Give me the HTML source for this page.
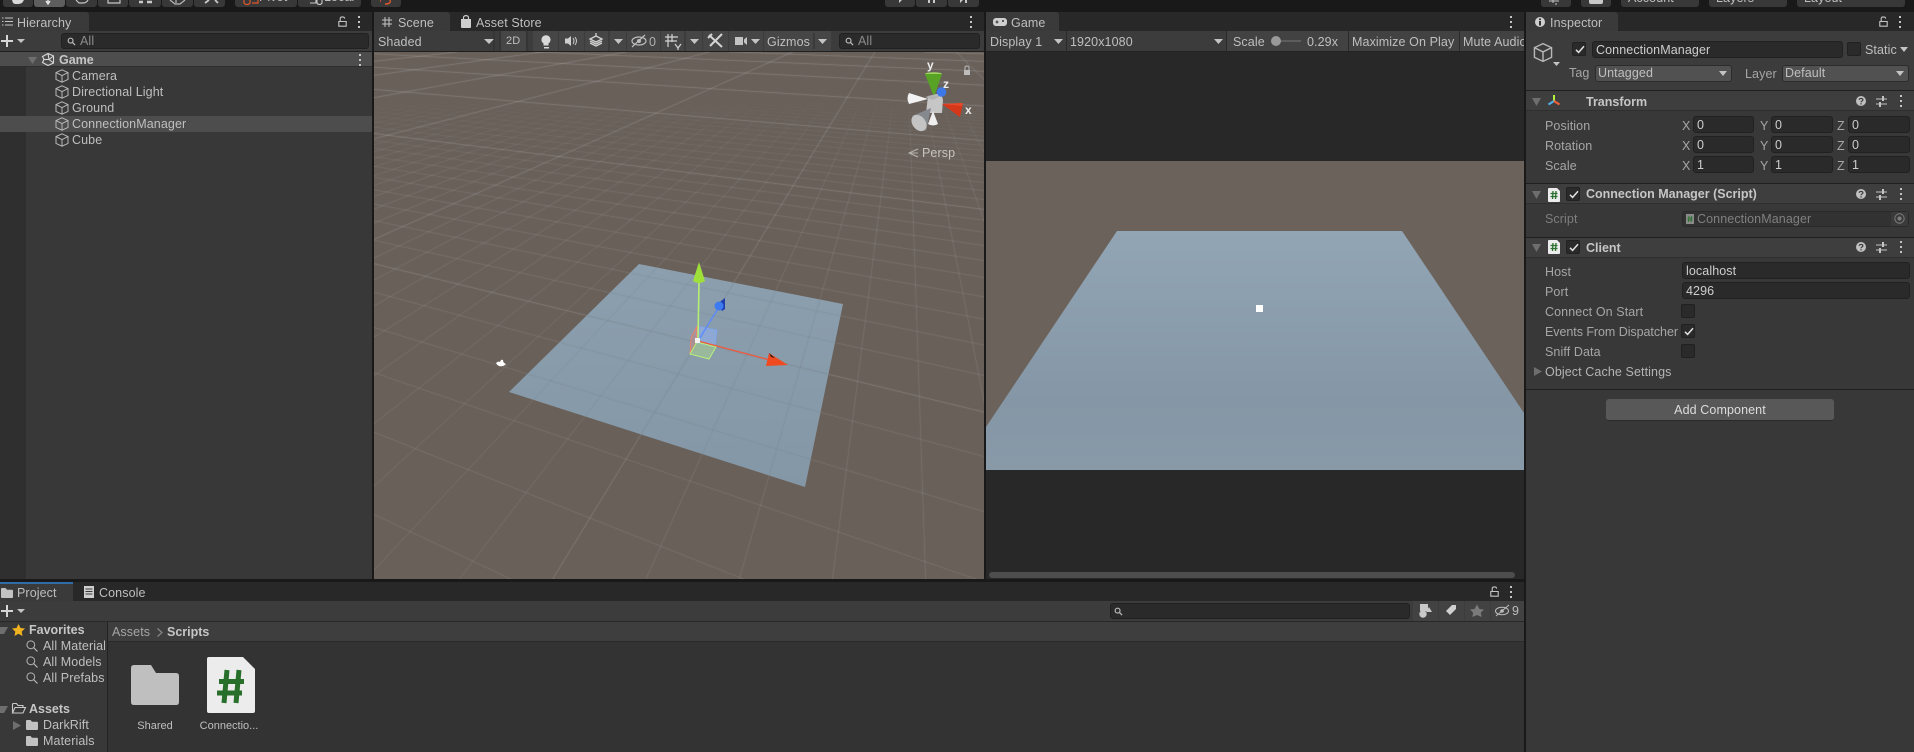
<!DOCTYPE html>
<html lang="en"><head><meta charset="utf-8"><title>Unity Editor</title>
<style>
html,body{margin:0;padding:0;width:1914px;height:752px;overflow:hidden;background:#191919}
body{position:relative;font:12.5px/16px "Liberation Sans",sans-serif;color:#bfbfbf}
div{box-sizing:border-box}
.a{position:absolute}
.t{position:absolute;white-space:nowrap;height:16px;line-height:16px;letter-spacing:.1px}
.b{font-weight:bold;color:#c6c6c6;letter-spacing:0}
.d{color:#8c8c8c}
.p{position:absolute;background:#383838;overflow:hidden}
.tb{position:absolute;background:#3c3c3c;height:20px}
.f{position:absolute;background:#2a2a2a;border:1px solid #212121;border-radius:3px;height:17px;line-height:17px;padding-left:3px;color:#cdcdcd;letter-spacing:.1px;white-space:nowrap}
.c{position:absolute;width:14px;height:14px;background:#2a2a2a;border:1px solid #212121;border-radius:2px}
.g{position:absolute;top:0;height:7px;background:#383838;border-radius:0 0 3px 3px}
.seg{position:absolute;top:31px;height:20px;background:#464646}
.sep{position:absolute;height:1px;background:#1f1f1f}
svg{position:absolute;overflow:visible}
</style></head><body>
<svg width="0" height="0" style="position:absolute"><defs>
<symbol id="cube" viewBox="0 0 14 14"><path d="M7 .8 13 3.6V10.400L7 13.200 1 10.400V3.600ZM1 3.600 7 6.600 13 3.600M7 6.600V13.200" fill="none" stroke="#b8b8b8" stroke-width="1"/></symbol>
<symbol id="dots" viewBox="0 0 4 12"><rect x="1" y="0" width="2" height="2" fill="#c4c4c4"/><rect x="1" y="5" width="2" height="2" fill="#c4c4c4"/><rect x="1" y="10" width="2" height="2" fill="#c4c4c4"/></symbol>
<symbol id="lock" viewBox="0 0 9 11"><path d="M.8 5.500H8.200V10.200H.8ZM2.200 5.500V2.600C2.200 .4 6.600 .4 6.600 2.600" fill="none" stroke="#c4c4c4" stroke-width="1.100"/></symbol>
<symbol id="mag" viewBox="0 0 10 10"><circle cx="4" cy="4" r="2.700" fill="none" stroke="#bbb" stroke-width="1.300"/><path d="M6 6 9 9" stroke="#bbb" stroke-width="1.400"/></symbol>
<symbol id="bigmag" viewBox="0 0 12 12"><circle cx="4.800" cy="4.800" r="3.900" fill="none" stroke="#b5b5b5" stroke-width="1"/><path d="M7.600 7.600 11.500 11.500" stroke="#b5b5b5" stroke-width="1.200"/></symbol>
<symbol id="help" viewBox="0 0 10 10"><circle cx="5" cy="5" r="5" fill="#c0c0c0"/><path d="M3.200 3.800C3.300 2 6.900 2 6.900 3.900 6.900 5.100 5 5 5 6.300" fill="none" stroke="#3c3c3c" stroke-width="1.200"/><rect x="4.400" y="7.200" width="1.300" height="1.300" fill="#3c3c3c"/></symbol>
<symbol id="sliders" viewBox="0 0 11 11"><path d="M0 3H11M0 8H11" stroke="#c4c4c4" stroke-width="1"/><rect x="6" y="0" width="2" height="5" fill="#c4c4c4"/><rect x="3" y="6" width="2" height="5" fill="#c4c4c4"/></symbol>
<symbol id="script" viewBox="0 0 12 14"><path d="M0 1Q0 0 1 0H9L12 3V13Q12 14 11 14H1Q0 14 0 13Z" fill="#ececec"/><path d="M5 3 4.500 11M8 3 7.500 11M2.500 5.500H9.500M2.500 8.500H9.500" stroke="#2a702e" stroke-width="1.300" fill="none"/></symbol>
<symbol id="check" viewBox="0 0 10 9"><path d="M1 4.800 3.600 7.400 9 1.200" fill="none" stroke="#e2e2e2" stroke-width="1.500"/></symbol>
<symbol id="folder" viewBox="0 0 12 10"><path d="M0 1Q0 0 1 0H4.500L6 1.800H11Q12 1.800 12 2.800V9Q12 10 11 10H1Q0 10 0 9Z" fill="#c2c2c2"/></symbol>
</defs></svg>

<!-- main toolbar -->
<div class="g" style="left:3px;width:30px"></div><div class="g" style="left:34px;width:31px;background:#5e5e5e"></div>
<div class="g" style="left:66px;width:31px"></div><div class="g" style="left:98px;width:30px"></div>
<div class="g" style="left:129px;width:32px"></div><div class="g" style="left:162px;width:31px"></div>
<div class="g" style="left:194px;width:31px"></div>
<div class="g" style="left:235px;width:62px"></div><div class="g" style="left:298px;width:63px"></div>
<div class="g" style="left:371px;width:30px"></div>
<div class="g" style="left:885px;width:30px"></div><div class="g" style="left:916px;width:31px"></div><div class="g" style="left:948px;width:31px"></div>
<div class="g" style="left:1541px;width:30px"></div><div class="g" style="left:1581px;width:30px"></div>
<div class="g" style="left:1621px;width:78px"></div><div class="g" style="left:1709px;width:78px"></div><div class="g" style="left:1797px;width:108px"></div>
<svg style="left:0;top:0" width="1914" height="12" viewBox="0 0 1914 12">
<path d="M12 0H24L22 3 19 4H15L13 3Z" fill="#d8d8d8"/>
<path d="M48 0V3M46 1 48 4 50 1" stroke="#e8e8e8" fill="none" stroke-width="1.400"/>
<path d="M76 0 79 3H83M88 0C87 2 85 3 83 3" stroke="#c8c8c8" fill="none" stroke-width="1.200"/>
<path d="M108 0V3H120V0" stroke="#c8c8c8" fill="none" stroke-width="1.200"/>
<path d="M139 2H143M147 2H152" stroke="#c8c8c8" stroke-width="2.600"/>
<path d="M170 0 175 4 180 4 185 0M176 0V3" stroke="#b8b8b8" fill="none" stroke-width="1.200"/>
<path d="M205 3 209 0M215 0 218 3" stroke="#c8c8c8" fill="none" stroke-width="1.800"/>
<path d="M244 0V3C245 5 249 5 250 3V0M252 3H258V0" stroke="#e0582a" fill="none" stroke-width="1.200"/>
<path d="M310 3H316V0M317 0V3C318 5 321 5 322 3V0" stroke="#c8c8c8" fill="none" stroke-width="1.100"/>
<path d="M380 1H381M390 0C391 3 389 4 385 4" stroke="#e0582a" fill="none" stroke-width="1.400"/>
<path d="M899 0 V3 L902 0Z M928 0H930V3H928ZM933 0H935V3H933ZM960 0V3L963 0ZM965 0H967V3H965Z" fill="#c8c8c8"/>
<path d="M1553 0V3M1549 1H1559M1556 3V5" stroke="#c4c4c4" fill="none"/>
<path d="M1589 0H1603V2Q1603 4 1601 4H1591Q1589 4 1589 2Z" fill="#c8c8c8"/>
</svg>
<div class="t" style="left:259px;top:-11px">Pivot</div>
<div class="t" style="left:324px;top:-11px">Local</div>
<div class="t" style="left:1628px;top:-10px">Account</div>
<div class="t" style="left:1716px;top:-10px">Layers</div>
<div class="t" style="left:1804px;top:-10px">Layout</div>

<!-- Hierarchy -->
<div class="p" style="left:0;top:12px;width:372px;height:567px;background:#383838"></div>
<div class="a" style="left:0;top:12px;width:372px;height:19px;background:#282828"></div>
<div class="a" style="left:0;top:12px;width:89px;height:19px;background:#3a3a3a;border-radius:0 3px 0 0"></div>
<svg style="left:2px;top:17px" width="11" height="9" viewBox="0 0 11 9"><path d="M3 1H11M3 4.500H11M3 8H11M0 1H1.500M0 4.500H1.500M0 8H1.500" stroke="#c4c4c4" stroke-width="1"/></svg>
<div class="t" style="left:17px;top:15px">Hierarchy</div>
<svg style="left:338px;top:16px" width="9" height="11"><use href="#lock"/></svg>
<svg style="left:357px;top:16px" width="4" height="12"><use href="#dots"/></svg>
<div class="tb" style="left:0;top:31px;width:372px"></div>
<div class="sep" style="left:0;top:51px;width:372px"></div>
<svg style="left:1px;top:35px" width="24" height="12" viewBox="0 0 24 12"><path d="M6 0V12M0 6H12" stroke="#d6d6d6" stroke-width="2"/><path d="M16 4H24L20 8Z" fill="#c4c4c4"/></svg>
<div class="f" style="left:61px;top:33px;width:308px;height:16px"></div>
<svg style="left:67px;top:37px" width="9" height="9"><use href="#mag"/></svg>
<div class="t d" style="left:80px;top:33px">All</div>
<div class="a" style="left:0;top:52px;width:26px;height:527px;background:#2f2f2f"></div>
<div class="a" style="left:0;top:52px;width:372px;height:15px;background:#4d4d4d;border-bottom:1px solid #2e2e2e"></div>
<svg style="left:28px;top:57px" width="9" height="7"><path d="M0 0H9L4.500 7Z" fill="#6e6e6e"/></svg>
<svg style="left:42px;top:53px" width="12" height="13" viewBox="0 0 12 13"><path d="M6 .5 11.500 3V10L6 12.500 .5 9.500 2 6.500 .5 3.500ZM6 .5 7 6.500 11.500 10M7 6.500 2 6.500M7 6.500 11.500 3" fill="none" stroke="#d8d8d8" stroke-width="1.100"/></svg>
<div class="t b" style="left:59px;top:52px">Game</div>
<svg style="left:358px;top:54px" width="4" height="12"><use href="#dots"/></svg>
<div class="a" style="left:0;top:116px;width:372px;height:16px;background:#4d4d4d"></div>
<svg style="left:55px;top:69px" width="14" height="14"><use href="#cube"/></svg><div class="t" style="left:72px;top:68px">Camera</div>
<svg style="left:55px;top:85px" width="14" height="14"><use href="#cube"/></svg><div class="t" style="left:72px;top:84px">Directional Light</div>
<svg style="left:55px;top:101px" width="14" height="14"><use href="#cube"/></svg><div class="t" style="left:72px;top:100px">Ground</div>
<svg style="left:55px;top:117px" width="14" height="14"><use href="#cube"/></svg><div class="t" style="left:72px;top:116px">ConnectionManager</div>
<svg style="left:55px;top:133px" width="14" height="14"><use href="#cube"/></svg><div class="t" style="left:72px;top:132px">Cube</div>

<!-- Scene -->
<div class="a" style="left:374px;top:12px;width:610px;height:19px;background:#282828"></div>
<div class="a" style="left:374px;top:12px;width:76px;height:19px;background:#3a3a3a;border-radius:0 3px 0 0"></div>
<svg style="left:382px;top:17px" width="10" height="10"><path d="M3 0V10M7 0V10M0 3H10M0 7H10" stroke="#c4c4c4" stroke-width="1"/></svg>
<div class="t" style="left:398px;top:15px">Scene</div>
<svg style="left:461px;top:15px" width="10" height="13" viewBox="0 0 10 13"><path d="M0 4H10V12Q10 13 9 13H1Q0 13 0 12Z" fill="#cfcfcf"/><path d="M2.500 5V2.500C2.500 0 7.500 0 7.500 2.500V5" fill="none" stroke="#cfcfcf" stroke-width="1.200"/></svg>
<div class="t" style="left:476px;top:15px">Asset Store</div>
<svg style="left:969px;top:16px" width="4" height="12"><use href="#dots"/></svg>
<div class="tb" style="left:374px;top:31px;width:610px"></div>
<div class="sep" style="left:374px;top:51px;width:610px"></div>
<div class="seg" style="left:501px;width:25px"></div><div class="seg" style="left:533px;width:25px"></div>
<div class="seg" style="left:559px;width:25px"></div><div class="seg" style="left:585px;width:41px"></div>
<div class="seg" style="left:627px;width:33px"></div><div class="seg" style="left:661px;width:41px"></div>
<div class="seg" style="left:703px;width:25px"></div><div class="seg" style="left:729px;width:34px"></div>
<div class="seg" style="left:764px;width:67px"></div>
<div class="t" style="left:378px;top:34px">Shaded</div>
<div class="t" style="left:506px;top:33px;font-size:11px">2D</div>
<div class="t" style="left:767px;top:34px">Gizmos</div>
<div class="t d" style="left:649px;top:34px;color:#b0b0b0">0</div>
<svg style="left:374px;top:31px" width="470" height="20" viewBox="374 31 470 20">
<path d="M484 39H494L489 44Z" fill="#c4c4c4"/>
<path d="M494 31V51M500 31V51M527 31V51" stroke="#2e2e2e"/>
<path d="M545 36A4.500 4.500 0 0 1 549 44V46H544V44A4.500 4.500 0 0 1 545 36Z" fill="#d8d8d8" transform="translate(-.5,-.5)"/><rect x="544" y="47" width="5" height="1.500" fill="#d8d8d8"/>
<path d="M565 38.500H568L571 36V46L568 43.500H565Z" fill="#cfcfcf"/><path d="M573 38Q575 41 573 44M575 37Q578 41 575 45" fill="none" stroke="#cfcfcf"/>
<path d="M590 39 596 36 602 39 596 42ZM590 43 596 46 602 43M590 41 596 44 602 41M596 33V36" fill="none" stroke="#d2d2d2" stroke-width="1.300"/>
<path d="M609 31V51" stroke="#333"/>
<path d="M614 39H623L618.500 44Z" fill="#c4c4c4"/>
<ellipse cx="639" cy="41" rx="7" ry="4" fill="none" stroke="#bdbdbd" stroke-width="1.200"/><circle cx="639" cy="41" r="2" fill="#bdbdbd"/><path d="M632 47 645 35" stroke="#bdbdbd" stroke-width="1.200"/>
<path d="M668 34V47M672 34V42M665 37H678M665 41H677M675 44 678 48M681 44 678 48V50" fill="none" stroke="#d4d4d4" stroke-width="1.200"/>
<path d="M685 31V51" stroke="#333"/>
<path d="M690 39H699L694.500 44Z" fill="#c4c4c4"/>
<path d="M709 35 722 47M722 34 710 46M708 38 712 34" fill="none" stroke="#d4d4d4" stroke-width="2"/>
<rect x="735" y="37" width="8" height="8" fill="#c4c4c4"/><path d="M744 39.500 747 37V45L744 42.500Z" fill="#c4c4c4"/>
<path d="M751 39H760L755.500 44Z" fill="#c4c4c4"/>
<path d="M814 33V49" stroke="#2e2e2e"/><path d="M818 39H827L822.500 44Z" fill="#c4c4c4"/>
</svg>
<div class="f" style="left:839px;top:33px;width:141px;height:16px"></div>
<svg style="left:845px;top:37px" width="9" height="9"><use href="#mag"/></svg>
<div class="t d" style="left:858px;top:33px">All</div>

<div class="a" id="scene" style="left:374px;top:52px;width:610px;height:527px;background:#69605a;overflow:hidden">
<svg style="left:0;top:0" width="610" height="527" viewBox="374 52 610 527">
<defs><linearGradient id="pg" x1="0" y1="0" x2="0" y2="1"><stop offset="0" stop-color="#8c9fae"/><stop offset="1" stop-color="#8497a6"/></linearGradient></defs>
<polygon points="639,264 843,304 805,487 509,392" fill="url(#pg)"/>
</svg>
<canvas id="grid" width="610" height="527" style="position:absolute;left:0;top:0"></canvas>
<svg style="left:0;top:0" width="610" height="527" viewBox="374 52 610 527">
<!-- cube selection -->
<polygon points="696,326 717,330 715,347 696,343" fill="#8fb0f0" fill-opacity=".6" stroke="#79a6ff" stroke-opacity=".8" stroke-width=".8"/>
<polygon points="691,338 697,326 696,343 690,354" fill="#e08070" fill-opacity=".35" stroke="#ff7a60" stroke-width=".8"/>
<polygon points="697,342 716,347 709,359 690,354" fill="#a6d090" fill-opacity=".55" stroke="#b6f27a" stroke-width="1"/>
<!-- axes -->
<path d="M698 340 699 282" stroke="#b4f073" stroke-width="1.600"/>
<path d="M698 341 719 307" stroke="#5c8cff" stroke-width="1.400"/>
<path d="M698 341 770 360" stroke="#f0593c" stroke-width="1.400"/>
<path d="M699 262 693 281Q699 285 705 281Z" fill="#9fdf3a"/>
<path d="M725 298 717 304 722 311 725 309Z" fill="#1f3fb0"/><circle cx="719" cy="306" r="4.500" fill="#3f7bf0"/>
<path d="M769 353 788 365 766 366Z" fill="#f04a20"/><path d="M769 353 775 358 771 357Z" fill="#3a1a10"/>
<rect x="695" y="338" width="5" height="5" fill="#f2f2f2"/>
<path d="M496 363Q498 361 500 362 501 359 503 360 503 363 506 364 503 367 499 366Q497 365 496 363Z" fill="#fff"/>
<!-- orientation gizmo -->
<ellipse cx="933.500" cy="74" rx="8.500" ry="1.800" fill="#9fd45e"/>
<path d="M925 74H942L934 97Z" fill="#58a226"/>
<path d="M928 96 941 93 943 100 942 113 926 113Z" fill="#c6c6c6"/><path d="M925 97 933 95 941 96 933 100Z" fill="#b2b2b2"/>
<circle cx="941.500" cy="92" r="4.800" fill="#3d78e8"/>
<path d="M928 99 909 93Q906 98 909 104Z" fill="#f2f2f2"/>
<path d="M942 104 963 103 960 117Z" fill="#d5371a"/>
<path d="M942 104 963 103 962 106Z" fill="#e8492a"/>
<path d="M931 108 912 116 926 131Z" fill="#85888c"/>
<ellipse cx="919" cy="123" rx="6.500" ry="9" transform="rotate(-38 919 123)" fill="#c4c4c4"/>
<path d="M933 111 928 124Q933 127 938 124Z" fill="#efefef"/>
<path d="M964 70H970V75H964Z" fill="#bdbdbd" stroke="none"/><path d="M965 70V67.500C965 65.500 969 65.500 969 67.500V70" fill="none" stroke="#bdbdbd" stroke-width="1"/>
<path d="M918 149 909 153 918 157M918 153H910" fill="none" stroke="#b8b4b0" stroke-width="1"/>
</svg>
<div class="t" style="left:553px;top:5px;font-weight:bold;color:#eee;font-size:12px">y</div>
<div class="t" style="left:569px;top:24px;font-weight:bold;color:#eee;font-size:12px">z</div>
<div class="t" style="left:591px;top:50px;font-weight:bold;color:#eee;font-size:12px">x</div>
<div class="t" style="left:548px;top:93px;color:#c8c4c0">Persp</div>
</div>

<!-- Game -->
<div class="a" style="left:986px;top:12px;width:538px;height:19px;background:#282828"></div>
<div class="a" style="left:986px;top:12px;width:73px;height:19px;background:#3a3a3a;border-radius:0 3px 0 0"></div>
<svg style="left:993px;top:18px" width="14" height="8" viewBox="0 0 14 8"><rect width="14" height="8" rx="3" fill="#cfcfcf"/><path d="M2.500 4H5.500M4 2.500V5.500" stroke="#333"/><circle cx="10" cy="3" r="1" fill="#333"/></svg>
<div class="t" style="left:1011px;top:15px">Game</div>
<svg style="left:1509px;top:16px" width="4" height="12"><use href="#dots"/></svg>
<div class="tb" style="left:986px;top:31px;width:538px"></div>
<div class="sep" style="left:986px;top:51px;width:538px;background:#232323"></div>
<div class="a" style="left:1066px;top:31px;width:1px;height:20px;background:#2a2a2a"></div>
<div class="a" style="left:1226px;top:31px;width:1px;height:20px;background:#2a2a2a"></div>
<div class="a" style="left:1348px;top:31px;width:1px;height:20px;background:#2a2a2a"></div>
<div class="a" style="left:1459px;top:31px;width:1px;height:20px;background:#2a2a2a"></div>
<div class="a" style="left:1227px;top:31px;width:121px;height:20px;background:#424242"></div>
<div class="a" style="left:1349px;top:31px;width:110px;height:20px;background:#424242"></div>
<div class="a" style="left:1460px;top:31px;width:64px;height:20px;background:#424242"></div>
<div class="t" style="left:990px;top:34px">Display 1</div>
<div class="t" style="left:1070px;top:34px">1920x1080</div>
<div class="t" style="left:1233px;top:34px">Scale</div>
<div class="t" style="left:1307px;top:34px">0.29x</div>
<div class="t" style="left:1352px;top:34px">Maximize On Play</div>
<div class="a" style="left:1463px;top:34px;width:61px;height:16px;overflow:hidden"><div class="t" style="left:0;top:0">Mute Audio</div></div>
<svg style="left:986px;top:31px" width="538" height="20" viewBox="986 31 538 20">
<path d="M1054 39H1063L1058.500 44Z" fill="#c4c4c4"/><path d="M1214 39H1223L1218.500 44Z" fill="#c4c4c4"/>
<path d="M1276 41H1301" stroke="#6e6e6e" stroke-width="1.200"/><circle cx="1276" cy="41" r="5" fill="#999"/>
</svg>
<div class="a" style="left:986px;top:52px;width:538px;height:527px;background:#282828"></div>
<svg style="left:986px;top:161px" width="538" height="309" viewBox="986 161 538 309">
<defs><linearGradient id="gg" x1="0" y1="0" x2="0" y2="1"><stop offset="0" stop-color="#92a5b5"/><stop offset=".7" stop-color="#8597a6"/><stop offset="1" stop-color="#8899a8"/></linearGradient></defs>
<rect x="986" y="161" width="538" height="309" fill="#6b625b"/>
<polygon points="1117,231 1402,231 1524,413 1524,470 986,470 986,427" fill="url(#gg)"/>
<rect x="1256" y="305" width="7" height="7" fill="#fff"/>
</svg>
<div class="a" style="left:989px;top:572px;width:526px;height:6px;background:#4d4d4d;border-radius:3px"></div>

<!-- Project -->
<div class="p" style="left:0;top:582px;width:1524px;height:170px;background:#333"></div>
<div class="a" style="left:0;top:582px;width:1524px;height:19px;background:#282828"></div>
<div class="a" style="left:0;top:582px;width:73px;height:19px;background:#3a3a3a"></div>
<div class="a" style="left:0;top:582px;width:73px;height:2px;background:#2f6ca8"></div>
<svg style="left:1px;top:588px" width="12" height="10"><use href="#folder"/></svg>
<div class="t" style="left:17px;top:585px">Project</div>
<svg style="left:84px;top:586px" width="10" height="12" viewBox="0 0 10 12"><rect width="10" height="12" fill="#cfcfcf"/><path d="M1.500 3H8.500M1.500 5.500H8.500M1.500 8H8.500" stroke="#3a3a3a"/></svg>
<div class="t" style="left:99px;top:585px">Console</div>
<svg style="left:1490px;top:586px" width="9" height="11"><use href="#lock"/></svg>
<svg style="left:1509px;top:586px" width="4" height="12"><use href="#dots"/></svg>
<div class="tb" style="left:0;top:601px;width:1524px"></div>
<div class="sep" style="left:0;top:621px;width:1524px;background:#282828"></div>
<svg style="left:1px;top:605px" width="24" height="12" viewBox="0 0 24 12"><path d="M6 0V12M0 6H12" stroke="#d6d6d6" stroke-width="2"/><path d="M16 4H24L20 8Z" fill="#c4c4c4"/></svg>
<div class="f" style="left:1110px;top:603px;width:300px;height:16px"></div>
<svg style="left:1114px;top:607px" width="9" height="9"><use href="#mag"/></svg>
<div class="seg" style="left:1413px;top:601px;width:25px;background:#424242"></div>
<div class="seg" style="left:1439px;top:601px;width:25px;background:#424242"></div>
<div class="seg" style="left:1465px;top:601px;width:25px;background:#424242"></div>
<div class="seg" style="left:1491px;top:601px;width:33px;background:#424242"></div>
<svg style="left:1413px;top:601px" width="111" height="20" viewBox="1413 601 111 20">
<rect x="1420" y="604" width="8" height="7" fill="#c8c8c8"/><circle cx="1423" cy="614" r="3.700" fill="#c8c8c8"/><path d="M1429 607 1432 612H1426Z" fill="#c8c8c8"/>
<path d="M1446 611 1452 605 1456 605 1456 609 1450 615Z" fill="#d0d0d0"/>
<path d="M1477 604.500 1479.500 609 1484 609.500 1480.800 612.800 1481.700 617 1477 615 1472.300 617 1473.200 612.800 1470 609.500 1474.500 609Z" fill="#7a7a7a"/>
<ellipse cx="1502" cy="611" rx="6.500" ry="3.800" fill="none" stroke="#bdbdbd"/><circle cx="1502" cy="611" r="1.800" fill="#bdbdbd"/><path d="M1496 616 1509 605" stroke="#bdbdbd"/>
</svg>
<div class="t" style="left:1512px;top:603px;color:#bdbdbd">9</div>
<div class="a" style="left:0;top:622px;width:107px;height:130px;background:#383838"></div>
<div class="a" style="left:107px;top:622px;width:1px;height:130px;background:#232323"></div>
<div class="a" style="left:108px;top:622px;width:1416px;height:20px;background:#3e3e3e;border-bottom:1px solid #2a2a2a"></div>
<div class="t" style="left:112px;top:624px;color:#a6a6a6">Assets</div>
<svg style="left:157px;top:628px" width="6" height="9"><path d="M.5 .5 5 4.500 .5 8.500" fill="none" stroke="#888" stroke-width="1.200"/></svg>
<div class="t b" style="left:167px;top:624px">Scripts</div>

<svg style="left:0;top:627px" width="8" height="7"><path d="M0 0H8L4 7H0Z" fill="#6e6e6e"/></svg>
<svg style="left:12px;top:624px" width="13" height="12" viewBox="0 0 13 12"><path d="M6.500 0 8.500 4 13 4.500 9.700 7.600 10.500 12 6.500 9.800 2.500 12 3.300 7.600 0 4.500 4.500 4Z" fill="#f0b320"/></svg>
<div class="t b" style="left:29px;top:622px">Favorites</div>
<svg style="left:26px;top:640px" width="12" height="12"><use href="#bigmag"/></svg>
<div class="a" style="left:43px;top:638px;width:62px;height:16px;overflow:hidden"><div class="t" style="left:0;top:0">All Materials</div></div>
<svg style="left:26px;top:656px" width="12" height="12"><use href="#bigmag"/></svg><div class="t" style="left:43px;top:654px">All Models</div>
<svg style="left:26px;top:672px" width="12" height="12"><use href="#bigmag"/></svg><div class="t" style="left:43px;top:670px">All Prefabs</div>
<svg style="left:0;top:706px" width="8" height="7"><path d="M0 0H8L4 7H0Z" fill="#6e6e6e"/></svg>
<svg style="left:12px;top:703px" width="14" height="11" viewBox="0 0 14 11"><path d="M.5 10V1.500Q.5 .5 1.500 .5H4.500L6 2.500H11V4.500M.5 10 3 4.500H13.500L11 10Z" fill="none" stroke="#c8c8c8" stroke-width="1.100"/></svg>
<div class="t b" style="left:29px;top:701px">Assets</div>
<svg style="left:13px;top:721px" width="8" height="9"><path d="M0 0 8 4.500 0 9Z" fill="#6e6e6e"/></svg>
<svg style="left:26px;top:720px" width="12" height="10"><use href="#folder"/></svg><div class="t" style="left:43px;top:717px">DarkRift</div>
<svg style="left:26px;top:736px" width="12" height="10"><use href="#folder"/></svg><div class="t" style="left:43px;top:733px">Materials</div>

<svg style="left:131px;top:665px" width="48" height="40" viewBox="0 0 48 40"><path d="M0 3Q0 0 3 0H20L25 8H45Q48 8 48 11V37Q48 40 45 40H3Q0 40 0 37Z" fill="#bfbfbf"/></svg>
<div class="t" style="left:127px;top:718px;width:56px;text-align:center;font-size:11px;letter-spacing:0">Shared</div>
<svg style="left:207px;top:657px" width="48" height="56" viewBox="207 657 48 56"><path d="M209 657H243L255 669V711Q255 713 253 713H209Q207 713 207 711V659Q207 657 209 657Z" fill="#ececec"/><path d="M227 670 224 703M239 670 236 703" stroke="#276f2b" stroke-width="5" fill="none"/><path d="M219 681.500H244M217 693H242" stroke="#276f2b" stroke-width="5" fill="none"/></svg>
<div class="t" style="left:199px;top:718px;width:60px;text-align:center;font-size:11px;letter-spacing:0">Connectio...</div>

<!-- Inspector -->
<div class="p" style="left:1526px;top:12px;width:388px;height:740px;background:#383838"></div>
<div class="a" style="left:1526px;top:12px;width:388px;height:19px;background:#282828"></div>
<div class="a" style="left:1526px;top:12px;width:92px;height:19px;background:#3a3a3a;border-radius:0 3px 0 0"></div>
<svg style="left:1535px;top:17px" width="10" height="10"><circle cx="5" cy="5" r="5" fill="#cfcfcf"/><rect x="4" y="4" width="2" height="4.500" fill="#333"/><rect x="4" y="1.500" width="2" height="1.600" fill="#333"/></svg>
<div class="t" style="left:1550px;top:15px">Inspector</div>
<svg style="left:1879px;top:16px" width="9" height="11"><use href="#lock"/></svg>
<svg style="left:1898px;top:16px" width="4" height="12"><use href="#dots"/></svg>
<div class="a" style="left:1526px;top:31px;width:388px;height:59px;background:#3c3c3c"></div>
<svg style="left:1533px;top:42px" width="20" height="21"><use href="#cube"/></svg>
<svg style="left:1553px;top:62px" width="7" height="4"><path d="M0 0H7L3.500 4Z" fill="#c4c4c4"/></svg>
<div class="c" style="left:1572px;top:42px"><svg style="left:2px;top:2px" width="10" height="9"><use href="#check"/></svg></div>
<div class="f" style="left:1592px;top:41px;width:251px;height:17px">ConnectionManager</div>
<div class="c" style="left:1847px;top:42px"></div>
<div class="t" style="left:1865px;top:42px">Static</div>
<svg style="left:1900px;top:47px" width="8" height="5"><path d="M0 0H8L4 5Z" fill="#c4c4c4"/></svg>
<div class="t d" style="left:1569px;top:65px;color:#a6a6a6">Tag</div>
<div class="a" style="left:1595px;top:65px;width:137px;height:17px;background:#515151;border:1px solid #2c2c2c;border-radius:3px"></div>
<div class="t" style="left:1598px;top:65px">Untagged</div>
<svg style="left:1719px;top:71px" width="8" height="5"><path d="M0 0H8L4 5Z" fill="#c4c4c4"/></svg>
<div class="t" style="left:1745px;top:66px;color:#a6a6a6">Layer</div>
<div class="a" style="left:1782px;top:65px;width:127px;height:17px;background:#515151;border:1px solid #2c2c2c;border-radius:3px"></div>
<div class="t" style="left:1785px;top:65px">Default</div>
<svg style="left:1896px;top:71px" width="8" height="5"><path d="M0 0H8L4 5Z" fill="#c4c4c4"/></svg>
<div class="sep" style="left:1526px;top:90px;width:388px;background:#1f1f1f"></div>

<!-- component headers -->
<div class="a" style="left:1526px;top:91px;width:388px;height:20px;background:#3e3e3e;border-bottom:1px solid #2f2f2f"></div>
<svg style="left:1532px;top:98px" width="9" height="8"><path d="M0 0H9L4.500 8Z" fill="#6e6e6e"/></svg>
<svg style="left:1548px;top:95px" width="12" height="12" viewBox="0 0 12 12"><path d="M6 6V0" stroke="#b6f03c" stroke-width="2"/><path d="M6 6 .5 9.500" stroke="#4fb0ea" stroke-width="2.200"/><path d="M6 6 11.500 9.500" stroke="#f0603a" stroke-width="2.200"/></svg>
<div class="t b" style="left:1586px;top:94px">Transform</div>
<svg style="left:1856px;top:96px" width="10" height="10"><use href="#help"/></svg>
<svg style="left:1876px;top:96px" width="11" height="11"><use href="#sliders"/></svg>
<svg style="left:1899px;top:95px" width="4" height="12"><use href="#dots"/></svg>

<div class="t d" style="left:1545px;top:118px;color:#a6a6a6">Position</div>
<div class="t d" style="left:1545px;top:138px;color:#a6a6a6">Rotation</div>
<div class="t d" style="left:1545px;top:158px;color:#a6a6a6">Scale</div>
<div class="t d" style="left:1682px;top:118px;color:#a6a6a6">X</div><div class="f" style="left:1693px;top:116px;width:61px">0</div>
<div class="t d" style="left:1760px;top:118px;color:#a6a6a6">Y</div><div class="f" style="left:1771px;top:116px;width:62px">0</div>
<div class="t d" style="left:1837px;top:118px;color:#a6a6a6">Z</div><div class="f" style="left:1848px;top:116px;width:62px">0</div>
<div class="t d" style="left:1682px;top:138px;color:#a6a6a6">X</div><div class="f" style="left:1693px;top:136px;width:61px">0</div>
<div class="t d" style="left:1760px;top:138px;color:#a6a6a6">Y</div><div class="f" style="left:1771px;top:136px;width:62px">0</div>
<div class="t d" style="left:1837px;top:138px;color:#a6a6a6">Z</div><div class="f" style="left:1848px;top:136px;width:62px">0</div>
<div class="t d" style="left:1682px;top:158px;color:#a6a6a6">X</div><div class="f" style="left:1693px;top:156px;width:61px">1</div>
<div class="t d" style="left:1760px;top:158px;color:#a6a6a6">Y</div><div class="f" style="left:1771px;top:156px;width:62px">1</div>
<div class="t d" style="left:1837px;top:158px;color:#a6a6a6">Z</div><div class="f" style="left:1848px;top:156px;width:62px">1</div>
<div class="sep" style="left:1526px;top:183px;width:388px"></div>

<div class="a" style="left:1526px;top:184px;width:388px;height:20px;background:#3e3e3e;border-bottom:1px solid #2f2f2f"></div>
<svg style="left:1532px;top:191px" width="9" height="8"><path d="M0 0H9L4.500 8Z" fill="#6e6e6e"/></svg>
<svg style="left:1548px;top:188px" width="12" height="14"><use href="#script"/></svg>
<div class="c" style="left:1566px;top:187px"><svg style="left:2px;top:2px" width="10" height="9"><use href="#check"/></svg></div>
<div class="t b" style="left:1586px;top:186px">Connection Manager (Script)</div>
<svg style="left:1856px;top:189px" width="10" height="10"><use href="#help"/></svg>
<svg style="left:1876px;top:189px" width="11" height="11"><use href="#sliders"/></svg>
<svg style="left:1899px;top:188px" width="4" height="12"><use href="#dots"/></svg>
<div class="t d" style="left:1545px;top:211px;color:#7e7e7e">Script</div>
<div class="a" style="left:1682px;top:211px;width:227px;height:16px;background:#323232;border:1px solid #2a2a2a;border-radius:3px"></div>
<div class="a" style="left:1891px;top:212px;width:17px;height:14px;background:#3a3a3a"></div>
<svg style="left:1686px;top:214px" width="8" height="10"><rect width="8" height="10" fill="#8a8a8a"/><path d="M3 2 2.500 8M5.500 2 5 8M1.500 4H6.500M1.500 6H6.500" stroke="#2a702e" stroke-width=".9"/></svg>
<div class="t" style="left:1697px;top:211px;color:#808080">ConnectionManager</div>
<svg style="left:1894px;top:213px" width="11" height="11"><circle cx="5.500" cy="5.500" r="4.700" fill="none" stroke="#7e7e7e"/><circle cx="5.500" cy="5.500" r="2" fill="#7e7e7e"/></svg>
<div class="sep" style="left:1526px;top:237px;width:388px"></div>

<div class="a" style="left:1526px;top:238px;width:388px;height:20px;background:#3e3e3e;border-bottom:1px solid #2f2f2f"></div>
<svg style="left:1532px;top:244px" width="9" height="8"><path d="M0 0H9L4.500 8Z" fill="#6e6e6e"/></svg>
<svg style="left:1548px;top:240px" width="12" height="14"><use href="#script"/></svg>
<div class="c" style="left:1566px;top:240px"><svg style="left:2px;top:2px" width="10" height="9"><use href="#check"/></svg></div>
<div class="t b" style="left:1586px;top:240px">Client</div>
<svg style="left:1856px;top:242px" width="10" height="10"><use href="#help"/></svg>
<svg style="left:1876px;top:242px" width="11" height="11"><use href="#sliders"/></svg>
<svg style="left:1899px;top:241px" width="4" height="12"><use href="#dots"/></svg>

<div class="t d" style="left:1545px;top:264px;color:#a6a6a6">Host</div><div class="f" style="left:1682px;top:262px;width:228px">localhost</div>
<div class="t d" style="left:1545px;top:284px;color:#a6a6a6">Port</div><div class="f" style="left:1682px;top:282px;width:228px">4296</div>
<div class="t d" style="left:1545px;top:304px;color:#a6a6a6">Connect On Start</div><div class="c" style="left:1681px;top:304px"></div>
<div class="t d" style="left:1545px;top:324px;color:#a6a6a6;letter-spacing:-.05px">Events From Dispatcher</div><div class="c" style="left:1681px;top:324px"><svg style="left:2px;top:2px" width="10" height="9"><use href="#check"/></svg></div>
<div class="t d" style="left:1545px;top:344px;color:#a6a6a6">Sniff Data</div><div class="c" style="left:1681px;top:344px"></div>
<svg style="left:1534px;top:367px" width="8" height="9"><path d="M0 0 8 4.500 0 9Z" fill="#6e6e6e"/></svg>
<div class="t" style="left:1545px;top:364px;color:#b4b4b4">Object Cache Settings</div>
<div class="sep" style="left:1526px;top:389px;width:388px"></div>
<div class="a" style="left:1606px;top:399px;width:228px;height:22px;background:#585858;border-radius:3px;border-bottom:1px solid #2a2a2a;text-align:center;line-height:23px;color:#dcdcdc;letter-spacing:.1px">Add Component</div>

<script>
(function(){
var c=document.getElementById('grid');if(!c||!c.getContext)return;var x=c.getContext('2d');
var A=[639,264],B=[843,304],C=[805,487],D=[509,392];
var dx1=B[0]-C[0],dx2=D[0]-C[0],sx=A[0]-B[0]+C[0]-D[0];
var dy1=B[1]-C[1],dy2=D[1]-C[1],sy=A[1]-B[1]+C[1]-D[1];
var den=dx1*dy2-dx2*dy1;
var g=(sx*dy2-dx2*sy)/den,h=(dx1*sy-sx*dy1)/den;
var a=B[0]-A[0]+g*B[0],b=D[0]-A[0]+h*D[0],d=B[1]-A[1]+g*B[1],e=D[1]-A[1]+h*D[1];
function P(p,q){var U=(p+25)/50,V=(q+25)/50,w=1+g*U+h*V;
 return {w:w,x:(a*U+b*V+A[0])/w-374,y:(d*U+e*V+A[1])/w-52};}
function cl(v){return v<0?0:v>1?1:v;}
function lines(rgb,k){
 for(var i=-80;i<=80;i++){var c0=i*10,maj=(i%10===0);
  for(var dir=0;dir<2;dir++){
   for(var t=-800;t<600;t+=10){
    var p=dir?P(c0,t):P(t,c0),q=dir?P(c0,t+10):P(t+10,c0);
    if(p.w<.03||q.w<.03)continue;
    if(Math.max(p.x,q.x)<0||Math.min(p.x,q.x)>610||Math.max(p.y,q.y)<0||Math.min(p.y,q.y)>527)continue;
    var w=(p.w+q.w)/2,al;
    if(maj) al=.16;
    else al=.1*cl((2.8-w)/1.5);
    if(al<=.005)continue;
    x.strokeStyle='rgba('+rgb+','+(al*k).toFixed(3)+')';x.lineWidth=1;
    x.beginPath();x.moveTo(p.x,p.y);x.lineTo(q.x,q.y);x.stroke();
   }
  }
 }
}
function poly(){x.moveTo(A[0]-374,A[1]-52);x.lineTo(B[0]-374,B[1]-52);x.lineTo(C[0]-374,C[1]-52);x.lineTo(D[0]-374,D[1]-52);x.closePath();}
x.save();x.beginPath();x.rect(0,0,610,527);poly();x.clip('evenodd');lines('255,255,255',1);x.restore();
x.save();x.beginPath();poly();x.clip();lines('105,105,105',1.6);x.restore();
})();
</script>
</body></html>
